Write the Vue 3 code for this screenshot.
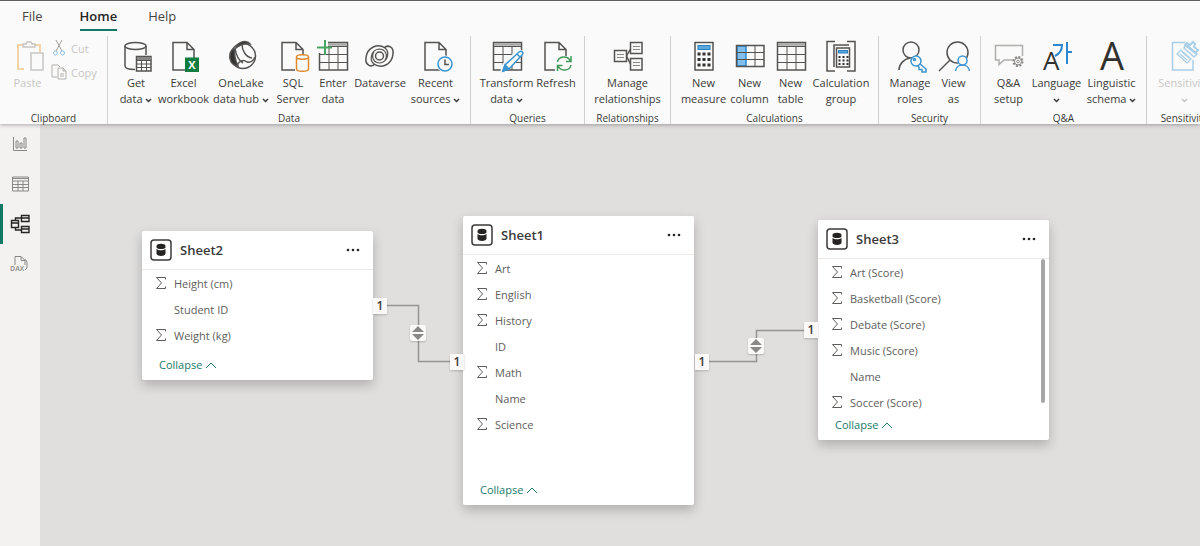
<template>
  <div class="app">
    <header class="ribbon">
      <nav class="tabs">
        <button
          v-for="tab in tabs"
          :key="tab"
          class="tab"
          :class="{ active: tab === activeTab }"
          @click="activeTab = tab"
        >
          {{ tab }}
        </button>
      </nav>

      <div class="groups">
        <section class="group clipboard">
          <div class="tools">
            <button class="tool" disabled>
              <svg class="icon" viewBox="0 0 32 32">
                <path d="M12 29H6V5h5M23 5h5v7" stroke="#f3d3a8" stroke-width="2" />
                <path d="M11 7V4h3c0-3 6-3 6 0h3v3z" />
                <rect x="19" y="13" width="12" height="17" fill="#fafafa" />
              </svg>
              <span>Paste</span>
            </button>
            <div class="small-tools">
              <button class="small-tool" disabled>
                <svg class="small-icon" viewBox="0 0 16 16">
                  <path d="M5 0l6 11M11 0L5 11" stroke="#a19f9d" />
                  <g stroke="#8fc0e2"><circle cx="4.5" cy="13" r="2" /><circle cx="11.5" cy="13" r="2" /></g>
                </svg>
                <span>Cut</span>
              </button>
              <button class="small-tool" disabled>
                <svg class="small-icon" viewBox="0 0 16 16">
                  <path d="M6 13H1V1h6l2 2M7 4h5l3 3v8H7zM12 4v3h3M9 10h4M9 12h4" stroke="#b3b0ad" />
                </svg>
                <span>Copy</span>
              </button>
            </div>
          </div>
          <h2>Clipboard</h2>
        </section>

        <section v-for="group in groups" :key="group.id" class="group" :class="group.id">
          <div class="tools">
            <button v-for="tool in group.tools" :key="tool.icon" class="tool" :disabled="tool.disabled">
              <svg class="icon" viewBox="0 0 32 32" v-html="icons[tool.icon]"></svg>
              <span>{{ tool.lines[0] }}</span>
              <span>
                {{ tool.lines[1] }}
                <svg v-if="tool.menu" class="chevron" viewBox="0 0 7 5"><path d="M1 1l2.5 2.500L6 1" /></svg>
              </span>
            </button>
          </div>
          <h2>{{ group.label }}</h2>
        </section>
      </div>
    </header>

    <main class="workspace">
      <nav class="views">
        <button
          v-for="view in views"
          :key="view.id"
          class="view"
          :class="{ active: view.id === activeView }"
          :aria-label="view.label"
          @click="activeView = view.id"
        >
          <svg viewBox="0 0 20 20" v-html="view.icon"></svg>
        </button>
      </nav>

      <div class="canvas">
        <svg class="links">
          <path v-for="link in links" :key="link.id" :d="link.path" />
        </svg>

        <article
          v-for="node in nodes"
          :key="node.title"
          class="node"
          :style="{ left: node.x + 'px', top: node.y + 'px', height: node.height + 'px' }"
        >
          <div class="node-header">
            <svg class="node-icon" viewBox="0 0 22 22">
              <rect x="1" y="1" width="20" height="20" rx="3" />
              <path d="M6.5 7c0-3 9-3 9 0v1.5c-1 2-8 2-9 0zM6.5 10c2 1.7 7 1.7 9 0v5c-1 2.5-8 2.5-9 0z" />
            </svg>
            <h3>{{ node.title }}</h3>
            <button class="more" aria-label="More options">
              <svg viewBox="0 0 14 4">
                <circle cx="2" cy="2" r="1.3" /><circle cx="7" cy="2" r="1.3" /><circle cx="12" cy="2" r="1.3" />
              </svg>
            </button>
          </div>
          <ul class="fields">
            <li v-for="field in node.fields" :key="field.name">
              <svg class="sigma" viewBox="0 0 12 14">
                <path v-if="field.sum" d="M10.5 3.5V1.5H1.5l5 5.5-5 5.5h9v-2" />
              </svg>
              {{ field.name }}
            </li>
          </ul>
          <button class="collapse">
            Collapse
            <svg viewBox="0 0 12 7"><path d="M1 6l5-5 5 5" /></svg>
          </button>
          <div v-if="node.scroll" class="scrollbar"></div>
        </article>

        <span
          v-for="end in ends"
          :key="end.x"
          class="end"
          :style="{ left: end.x + 'px', top: end.y + 'px' }"
        >1</span>

        <span
          v-for="link in links"
          :key="link.id"
          class="direction"
          :style="{ left: link.x + 'px', top: link.y + 'px' }"
        >
          <svg viewBox="0 0 16 16"><path d="M2 7l6-6 6 6zM2 9h12l-6 6z" /></svg>
        </span>
      </div>
    </main>
  </div>
</template>

<script setup>
import { ref } from "vue";

const tabs = ["File", "Home", "Help"];
const activeTab = ref("Home");
const activeView = ref("model");

const groups = [
  {
    id: "data",
    label: "Data",
    tools: [
      { icon: "getData", lines: ["Get", "data"], menu: true },
      { icon: "excel", lines: ["Excel", "workbook"] },
      { icon: "oneLake", lines: ["OneLake", "data hub"], menu: true },
      { icon: "sql", lines: ["SQL", "Server"] },
      { icon: "enterData", lines: ["Enter", "data"] },
      { icon: "dataverse", lines: ["Dataverse", ""] },
      { icon: "recent", lines: ["Recent", "sources"], menu: true },
    ],
  },
  {
    id: "queries",
    label: "Queries",
    tools: [
      { icon: "transform", lines: ["Transform", "data"], menu: true },
      { icon: "refresh", lines: ["Refresh", ""] },
    ],
  },
  {
    id: "relationships",
    label: "Relationships",
    tools: [{ icon: "relationships", lines: ["Manage", "relationships"] }],
  },
  {
    id: "calculations",
    label: "Calculations",
    tools: [
      { icon: "measure", lines: ["New", "measure"] },
      { icon: "column", lines: ["New", "column"] },
      { icon: "table", lines: ["New", "table"] },
      { icon: "calcGroup", lines: ["Calculation", "group"] },
    ],
  },
  {
    id: "security",
    label: "Security",
    tools: [
      { icon: "roles", lines: ["Manage", "roles"] },
      { icon: "viewAs", lines: ["View", "as"] },
    ],
  },
  {
    id: "qna",
    label: "Q&A",
    tools: [
      { icon: "qna", lines: ["Q&A", "setup"] },
      { icon: "language", lines: ["Language", ""], menu: true },
      { icon: "linguistic", lines: ["Linguistic", "schema"], menu: true },
    ],
  },
  {
    id: "sensitivity",
    label: "Sensitivity",
    tools: [{ icon: "sensitivity", lines: ["Sensitivity", ""], menu: true, disabled: true }],
  },
];

// --- ICONS ---

const page = (x) => `<path d="M${x} 2.5h14l7 7v20.5H${x}zM${x + 14} 2.5v7h7" />`;
const grid =
  '<rect x="2.5" y="2.5" width="28" height="27.5"/><path d="M3 4.5h27" stroke="#a8a8a8" stroke-width="2.5"/><path d="M2.5 6.5h28M2.5 14.5h28M2.5 22.5h28M12 6.5V30M21 6.5V30" stroke-width="1"/>';

const icons = {
  getData:
    '<ellipse cx="15.5" cy="6" rx="10.5" ry="3.5"/><path d="M5 6v20c0 2 4 3.5 10 3.5M26 6v9"/><rect x="16.5" y="16.5" width="14.5" height="14.5" fill="#fff"/><path d="M17 18.5h14" stroke="#8a8886" stroke-width="3"/><path d="M16.5 20.5h14.5M16.5 24h14.5M16.5 27.5h14.5M21.5 20v11M26.5 20v11" stroke-width="1"/>',
  excel:
    page(5) +
    '<rect x="17" y="17.5" width="14" height="14.5" fill="#107c41" stroke="none"/><text x="24" y="29" font-size="11" font-weight="700" text-anchor="middle" fill="#fff" stroke="none">X</text>',
  oneLake:
    '<circle cx="18" cy="16" r="12.5"/><path d="M11 7c3-6 11-7 14-3-5-1-9 0-14 4zM10 9c-1 6 0 11 3 17-7-1-9-7-8-11 0-3 2-6 5-6z" fill="#323130"/><path d="M10 8c1 7 3 12 8 15M17 4c0 7 4 13 10 14M12 27c1-6 6-8 10-5 3 1 6-1 8-5"/>',
  sql:
    page(5) +
    '<path d="M18 15h14v17H18z" fill="#fafafa" stroke="none"/><g stroke="#e08a2e" fill="#fafafa"><path d="M19.5 17v12c0 3 12 3 12 0V17"/><ellipse cx="25.5" cy="17" rx="6" ry="2.2"/></g>',
  enterData:
    grid +
    '<path d="M0 0h11v13H0z" fill="#fafafa" stroke="none"/><path d="M8 0v15M0 7.5h15" stroke="#4aa564" stroke-width="2"/>',
  dataverse:
    '<circle cx="15.5" cy="16" r="4"/><path d="M21 8C14 3 3 7 2 18c-1 7 5 10 9 6M10 24c7 5 18 1 19-10 1-7-5-10-9-6"/><path d="M10 24c-5-4-3-14 5-15 7 0 9 7 6 11M21 8c5 4 3 14-5 15-7 0-9-7-6-11" stroke-width="1.2"/>',
  recent:
    page(5) +
    '<circle cx="25" cy="24" r="8.5" fill="#fafafa" stroke="none"/><circle cx="25" cy="24" r="7" stroke="#3b95d0"/><path d="M25 19.5V24.5h4"/>',
  transform:
    grid +
    '<path d="M9 32l3-9L28 8l5 4-16 17z" fill="#fafafa" stroke="none"/><path d="M12 31l2-6 14-13c3-2 5 1 3 3L18 29zM26 14l3 3" stroke="#3b95d0" fill="#fafafa"/><path d="M12 31l2-6 4 4z" fill="#3b95d0" stroke="#3b95d0"/>',
  refresh:
    page(5) +
    '<path d="M15 16h17v16H15z" fill="#fafafa" stroke="none"/><path d="M17.5 22c1-6 10-7 13-1M31 16v5.5h-5M31 25c-1 6-10 7-13 1M17.5 31v-5.5h5" stroke="#3f9a57"/>',
  relationships:
    '<rect x="2.5" y="10.5" width="12" height="11"/><rect x="18.5" y="2.5" width="11.5" height="11"/><rect x="18.5" y="18.5" width="11.5" height="11.5"/><path d="M14.5 16l4-7M14.5 16l4 8"/><path d="M5 14.5h7M5 17.5h7M21 6.5h7M21 9.5h7M21 22.5h7M21 25.5h7" stroke="#8a8886" stroke-width="1"/>',
  measure:
    '<rect x="7" y="2.5" width="18" height="27.5"/><rect x="10" y="5.5" width="12" height="4" fill="#5aaae0" stroke="#2b7fc0" stroke-width="1"/><path d="M9.5 14h14M9.5 19.5h14M9.5 25h14" stroke="#323130" stroke-width="3" stroke-dasharray="3 2"/>',
  column:
    '<path d="M3 6h9v20H3z" fill="#83bfec" stroke="#2b88d0"/><path d="M12 12.5h18M12 19.5h18M21 5.5v21M3 12.5h9M3 19.5h9" stroke-width="1"/><rect x="2.5" y="5.5" width="27.5" height="21"/>',
  table: grid,
  calcGroup:
    '<path d="M10 1.5H2V31h8M22 1.5h8V31h-8M9 27V5h15"/><rect x="11.5" y="8" width="13" height="19"/><rect x="13.5" y="10.5" width="9" height="2.5" fill="#5aaae0" stroke="#2b7fc0" stroke-width="1"/><path d="M13.5 17h10M13.5 20.5h10M13.5 24h10" stroke="#323130" stroke-width="2" stroke-dasharray="2 2"/>',
  roles:
    '<circle cx="17" cy="10" r="8"/><path d="M5 30c0-6 5-11 11-12"/><path d="M25.5 23.5l6.500 5.500v3h-4v-2.500h-3v-2.500l-2.500-2z" stroke="#3b95d0" fill="#fafafa"/><circle cx="22" cy="21" r="5" stroke="#3b95d0" fill="#fafafa"/><circle cx="20.5" cy="19.5" r="1" stroke="#3b95d0"/>',
  viewAs:
    '<circle cx="19.5" cy="12.5" r="10.5"/><path d="M12 20L1 31"/><path d="M17 32c0-4 1-6 3-8-2-9 11-9 9 0 2 2 3 4 3 8z" fill="#fafafa" stroke="none"/><path d="M17.5 31c1-8 13-8 14 0" stroke="#3b95d0"/><circle cx="24.5" cy="20.5" r="4.5" stroke="#3b95d0" fill="#fafafa"/>',
  qna:
    '<g stroke="#b0aeac"><path d="M20 20h-9l-5 4.5V20H2.5V5.5h27V16"/><circle cx="25" cy="21.5" r="4.5" stroke="#8a8886" stroke-width="2" stroke-dasharray="2 1.5"/><circle cx="25" cy="21.5" r="3.5" stroke="#8a8886" stroke-width="1"/><circle cx="25" cy="21.5" r="1.3" stroke="#8a8886" stroke-width="1"/></g>',
  language:
    '<g stroke="none"><text x="2" y="30" font-size="26" fill="#323130">A</text></g><path d="M12 5h9c0 5-3 9-7 11M26 2v22M26 12h5" stroke="#2b88d0" stroke-width="2"/>',
  linguistic: '<g stroke="none"><text x="16" y="30" font-size="38" text-anchor="middle" fill="#323130">A</text></g>',
  sensitivity:
    '<g stroke="#a9cfe8"><path d="M17 2.5H4.5v27.500H25V20"/><path d="M9 14l4-4 10 9-4 4zM12 14l7 6M14 12l7 6" stroke-width="1.2"/><path d="M17 5l2-2 3 2 3-3 2 2-1 3 4 3-3 3z" stroke-width="2"/><path d="M16 8l10 9 3-3L18 4z"/></g>',
};

const views = [
  {
    id: "report",
    label: "Report view",
    icon: '<path d="M3.5 3v13.5H17M6 7h2v7H6zM10 9h2v5h-2zM14 4h2v10h-2z"/>',
  },
  {
    id: "table",
    label: "Table view",
    icon: '<path d="M2.5 3h16v14h-16zM2.5 4.5h16M2.5 7h16M2.5 10.5h16M2.5 13.5h16M8 7v10M13 7v10"/>',
  },
  {
    id: "model",
    label: "Model view",
    icon: '<path d="M1.500 6.5h7v7h-7zM1.500 9h7M11.500 1.5h7.500v6h-7.500zM11.500 4h7.500M11.500 12.500h7.500v6h-7.500zM11.500 15h7.500M5.500 6.5V4h6M5.500 13.5V16h6" stroke-width="1.4"/>',
  },
  {
    id: "dax",
    label: "DAX query view",
    icon: '<path d="M5 11V2.5h6l4 4V11M11 2.5v4h4M15 5l2 3v6l-2 2"/><text x="0" y="17" font-size="7" font-weight="600" fill="currentColor" stroke="none">DAX</text>',
  },
];

// --- MODEL ---

const column = (name) => ({ name, sum: false });
const measure = (name) => ({ name, sum: true });

const nodes = [
  {
    title: "Sheet2",
    x: 102,
    y: 107,
    height: 149,
    fields: [measure("Height (cm)"), column("Student ID"), measure("Weight (kg)")],
  },
  {
    title: "Sheet1",
    x: 423,
    y: 92,
    height: 289,
    fields: [
      measure("Art"),
      measure("English"),
      measure("History"),
      column("ID"),
      measure("Math"),
      column("Name"),
      measure("Science"),
    ],
  },
  {
    title: "Sheet3",
    x: 778,
    y: 96,
    height: 220,
    scroll: true,
    fields: [
      measure("Art (Score)"),
      measure("Basketball (Score)"),
      measure("Debate (Score)"),
      measure("Music (Score)"),
      column("Name"),
      measure("Soccer (Score)"),
    ],
  },
];

const ends = [
  { x: 333, y: 174 },
  { x: 410, y: 230 },
  { x: 655, y: 230 },
  { x: 764, y: 198 },
];

const links = [
  { id: "sheet2-sheet1", path: "M340 181.5H378.5V237.5H415", x: 370, y: 201 },
  { id: "sheet1-sheet3", path: "M660 237.5H716.5V206.5H770", x: 708, y: 214 },
];
</script>

<style>
body {
  margin: 0;
}
</style>

<style scoped>
.app {
  display: flex;
  flex-direction: column;
  min-height: 100vh;
  overflow: hidden;
  font-family: "Open Sans", "Noto Sans", sans-serif;
  font-size: 11px;
  color: #3b3a39;
}
h2,
h3,
ul {
  margin: 0;
  padding: 0;
}
button {
  padding: 0;
  border: none;
  background: none;
  color: inherit;
  font: inherit;
  cursor: pointer;
}
svg {
  fill: none;
  stroke: currentColor;
}

/* ribbon */
.ribbon {
  position: relative;
  z-index: 1;
  background: #fafafa;
  border-top: 1px solid #605e5c;
  box-shadow: 0 1px 4px rgba(0, 0, 0, 0.3);
}
.tabs {
  display: flex;
  gap: 31px;
  height: 35px;
  padding-left: 22px;
}
.tab {
  height: 30px;
  padding-top: 2px;
  font-size: 13px;
  color: #484644;
  border-bottom: 2px solid transparent;
}
.tab:first-child {
  margin-right: 6px;
}
.tab.active {
  color: #252423;
  font-weight: 600;
  border-color: #117865;
}
.groups {
  display: flex;
}
.group {
  display: flex;
  flex-direction: column;
  flex: none;
  box-sizing: border-box;
  height: 88px;
  padding: 0 7px;
  border-right: 1px solid #d2d0ce;
}
.group:last-child {
  border-right: none;
}
.group h2 {
  margin-top: auto;
  font-size: 10px;
  font-weight: 400;
  line-height: 12px;
  text-align: center;
}
.tools {
  display: grid;
  justify-content: center;
}
.clipboard .tools {
  grid-template-columns: 41px 52px;
}
.data .tools {
  grid-template-columns: 42px 53px 62px 42px 38px 56px 55px;
}
.queries .tools {
  grid-template-columns: 57px 42px;
}
.relationships .tools {
  grid-template-columns: 71px;
}
.calculations .tools {
  grid-template-columns: 51px 41px 41px 60px;
}
.security .tools {
  grid-template-columns: 48px 39px;
}
.qna .tools {
  grid-template-columns: 41px 55px 55px;
}
.sensitivity .tools {
  grid-template-columns: 60px;
}
.tool {
  display: flex;
  flex-direction: column;
  align-items: center;
  padding-top: 4px;
  line-height: 16px;
  white-space: nowrap;
}
.tool:disabled,
.small-tool:disabled {
  color: #c8c6c4;
  cursor: default;
}
.icon {
  width: 32px;
  height: 32px;
  margin-bottom: 3px;
  stroke: #555351;
  stroke-width: 1.5;
  overflow: visible;
}
.tool:disabled .icon {
  stroke: #c8c6c4;
}
.chevron {
  width: 7px;
  height: 5px;
  stroke-width: 1.5;
}
.small-tools {
  padding-left: 3px;
}
.small-tool {
  display: flex;
  align-items: center;
  gap: 4px;
  height: 24px;
}
.small-icon {
  width: 16px;
  height: 16px;
}

/* view switcher */
.workspace {
  display: flex;
  flex: 1;
}
.views {
  display: flex;
  flex-direction: column;
  flex: none;
  width: 40px;
  background: #f3f2f1;
}
.view {
  display: flex;
  align-items: center;
  justify-content: center;
  height: 40px;
  padding-right: 3px;
  border-left: 3px solid transparent;
  color: #8a8886;
}
.view svg {
  width: 20px;
  height: 20px;
}
.view.active {
  border-color: #117865;
  color: #252423;
}

/* model canvas */
.canvas {
  position: relative;
  flex: 1;
  overflow: hidden;
  background: #e0dfdd;
}
.links {
  position: absolute;
  width: 100%;
  height: 100%;
  stroke: #979593;
  stroke-width: 1.5;
}
.node {
  position: absolute;
  display: flex;
  flex-direction: column;
  box-sizing: border-box;
  width: 231px;
  background: #fff;
  border-radius: 2px;
  box-shadow: 0 5px 12px rgba(0, 0, 0, 0.22);
}
.node-header {
  display: flex;
  align-items: center;
  gap: 8px;
  height: 38px;
  padding: 0 13px 0 8px;
  border-bottom: 1px solid #edebe9;
}
.node-icon {
  width: 22px;
  height: 22px;
  stroke-width: 1.5;
}
.node-icon path {
  fill: #252423;
  stroke: none;
}
.node h3 {
  font-size: 13px;
  font-weight: 600;
}
.more {
  display: flex;
  margin-left: auto;
}
.more svg {
  width: 14px;
  height: 4px;
  fill: #252423;
  stroke: none;
}
.fields {
  padding-left: 13px;
  list-style: none;
  color: #605e5c;
}
.fields li {
  display: flex;
  align-items: center;
  gap: 7px;
  height: 26px;
}
.sigma {
  width: 12px;
  height: 14px;
}
.collapse {
  position: absolute;
  bottom: 7px;
  left: 17px;
  line-height: 16px;
  color: #217a69;
}
.collapse svg {
  width: 12px;
  height: 7px;
}
.scrollbar {
  position: absolute;
  top: 39px;
  right: 4px;
  bottom: 37px;
  width: 4px;
  border-radius: 2px;
  background: #a6a6a6;
}
.end {
  position: absolute;
  width: 14px;
  height: 16px;
  background: #faf9f8;
  box-shadow: 0 1px 2px rgba(0, 0, 0, 0.2);
  font-size: 12px;
  font-weight: 600;
  line-height: 16px;
  text-align: center;
}
.direction {
  position: absolute;
  display: flex;
  width: 16px;
  height: 16px;
  border-radius: 2px;
  background: #faf9f8;
  box-shadow: 0 1px 2px rgba(0, 0, 0, 0.2);
}
.direction path {
  fill: #8a8886;
  stroke: none;
}
</style>
